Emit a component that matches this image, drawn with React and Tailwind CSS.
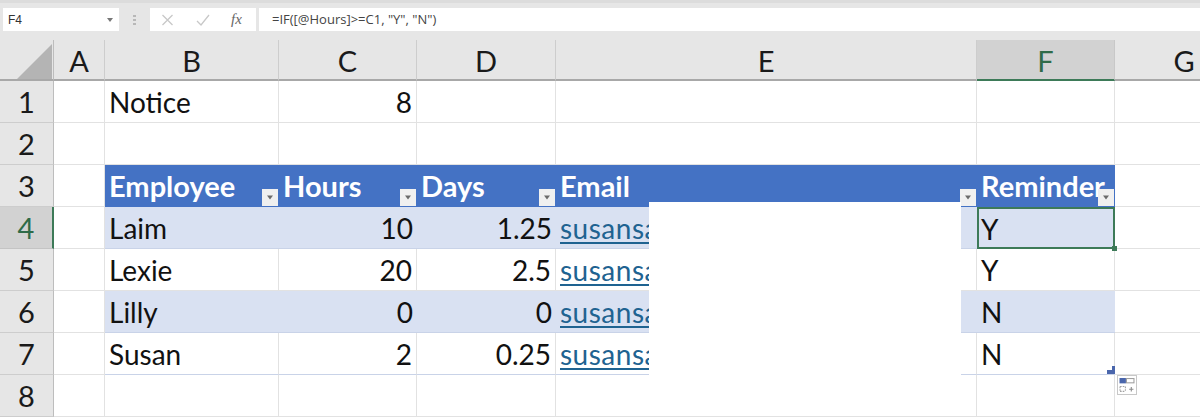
import React from "react";

const grid = "border-r border-b border-[#e2e2e2]";
const Filter = () => (
  <span className="absolute right-[1px] bottom-[1px] w-[16px] h-[17px] bg-[#f0f0f0] flex items-center justify-center">
    <svg width="8" height="5" viewBox="0 0 8 5"><path d="M1 0.5h6L4 4.5z" fill="#6b6b6b" /></svg>
  </span>
);

const ColHead = ({ children, active, cls = "" }) => (
  <div className={`flex items-center justify-center text-[29px] border-r border-b-2 pt-[3px] ${active ? "bg-[#d2d2d2] text-[#2f6b48] border-b-[#3d7a58] border-r-[#c8c8c8]" : "bg-[#e6e6e6] text-[#1a1a1a] border-b-[#a8a8a8] border-r-[#cdcdcd]"} ${cls}`}>
    {children}
  </div>
);
const RowHead = ({ children, active }) => (
  <div className={`flex items-center justify-center text-[29px] border-b pt-[1px] ${active ? "bg-[#d2d2d2] text-[#2f6b48] border-r-2 border-r-[#3d7a58] border-b-[#c4c4c4]" : "bg-[#e6e6e6] text-[#1a1a1a] border-r border-r-[#bdbdbd] border-b-[#cdcdcd]"}`}>
    {children}
  </div>
);
const Cell = ({ children, right, band, active, last, cls = "" }) => {
  const skin = active
    ? "bg-[#d9e1f2] border-2 border-[#3d7a58]"
    : band
      ? "bg-[#d9e1f2] border-b border-[#c9d3e8]"
      : last
        ? "border-r border-b border-r-[#e2e2e2] border-b-[#c9d3e8]"
        : grid;
  return (
    <div className={`relative flex items-center text-[28px] text-[#111] pt-[1px] overflow-hidden ${active ? "pl-[2px]" : "pl-[4px]"} ${right ? "justify-end pr-[4px]" : ""} ${skin} ${cls}`}>
      {children}
    </div>
  );
};
const Header = ({ children, cls = "" }) => (
  <div className={`relative flex items-center bg-[#4472c4] text-white font-bold text-[29px] pl-[4px] whitespace-nowrap overflow-hidden ${cls}`}>
    <span className="-mt-[1px]">{children}</span>
    <Filter />
  </div>
);
const Link = () => <span className="text-[#1f6391] underline decoration-2 underline-offset-[3px] whitespace-nowrap tracking-[0.5px]">susansa</span>;

const rows = [
  ["Laim", "10", "1.25", "Y", true],
  ["Lexie", "20", "2.5", "Y", false],
  ["Lilly", "0", "0", "N", true],
  ["Susan", "2", "0.25", "N", false],
];

export default function App() {
  return (
    <div className="relative w-[1200px] h-[420px] overflow-hidden bg-white" style={{ fontFamily: '"Lato", "Open Sans", sans-serif' }}>
      {/* formula bar */}
      <div className="h-[40px] bg-[#e6e6e6] flex items-start gap-[3px] pt-[5px] pl-[3px] border-t-[3px] border-t-[#dcdcdc]">
        <div className="w-[116px] h-[23px] bg-white flex items-center justify-between pl-[5px] pr-[6px] text-[12px] text-[#333]" style={{ fontFamily: '"Liberation Sans", sans-serif' }}>
          <span>F4</span>
          <svg width="6" height="4" viewBox="0 0 6 4"><path d="M0 0h6L3 4z" fill="#777" /></svg>
        </div>
        <div className="w-[25px] flex flex-col items-center justify-center h-[23px] gap-[2px]">
          <span className="w-[3px] h-[2px] bg-[#b8b8b8]" /><span className="w-[3px] h-[2px] bg-[#b8b8b8]" /><span className="w-[3px] h-[2px] bg-[#b8b8b8]" />
        </div>
        <div className="w-[106px] h-[23px] bg-white flex items-center pl-[11px] gap-[22px]">
          <svg width="13" height="12" viewBox="0 0 13 12"><path d="M1.5 1l10 10M11.5 1l-10 10" stroke="#c8c8c8" strokeWidth="1.3" fill="none" /></svg>
          <svg width="14" height="12" viewBox="0 0 14 12"><path d="M1 7l4 4 8-10" stroke="#c8c8c8" strokeWidth="1.3" fill="none" /></svg>
          <span className="text-[15px] italic text-[#666] -ml-[1px]" style={{ fontFamily: '"Liberation Serif", serif' }}>fx</span>
        </div>
        <div className="flex-1 h-[23px] bg-white flex items-center pl-[13px] text-[13px] text-[#444]" style={{ fontFamily: '"Open Sans", sans-serif' }}>
          =IF([@Hours]&gt;=C1, "Y", "N")
        </div>
      </div>

      {/* sheet */}
      <div className="grid grid-cols-[54px_51px_174px_138px_139px_421px_138px_138px] grid-rows-[41px_42px_42px_42px_42px_42px_42px_42px_42px]">
        <div className="relative bg-[#e6e6e6] border-r border-b-2 border-r-[#bdbdbd] border-b-[#a8a8a8]">
          <svg className="absolute left-[17px] top-[4px]" width="36" height="35" viewBox="0 0 36 35"><path d="M35 0V35H0z" fill="#b4b4b4" /></svg>
        </div>
        <ColHead>A</ColHead><ColHead>B</ColHead><ColHead>C</ColHead><ColHead>D</ColHead><ColHead>E</ColHead>
        <ColHead active>F</ColHead><ColHead cls="border-r-0">G</ColHead>

        <RowHead>1</RowHead><Cell /><Cell>Notice</Cell><Cell right>8</Cell><Cell /><Cell /><Cell /><Cell />
        <RowHead>2</RowHead><Cell /><Cell /><Cell /><Cell /><Cell /><Cell /><Cell />

        <RowHead>3</RowHead><Cell />
        <Header>Employee</Header><Header>Hours</Header><Header>Days</Header><Header>Email</Header><Header>Reminder</Header>
        <Cell />

        {rows.map(([name, hours, days, rem, band], i) => {
          const last = i === rows.length - 1;
          return (
            <React.Fragment key={name}>
              <RowHead active={i === 0}>{i + 4}</RowHead>
              <Cell />
              <Cell band={band} last={last}>{name}</Cell>
              <Cell band={band} last={last} right>{hours}</Cell>
              <Cell band={band} last={last} right>{days}</Cell>
              <Cell band={band} last={last}><Link /></Cell>
              <Cell band={band} last={last} active={i === 0}>{rem}</Cell>
              <Cell />
            </React.Fragment>
          );
        })}

        <RowHead>8</RowHead><Cell /><Cell /><Cell /><Cell /><Cell /><Cell /><Cell />
      </div>

      {/* redaction patch over the email column */}
      <div className="absolute left-[649px] top-[202px] w-[312px] h-[173px] bg-white" />
      {/* fill handle on the active cell */}
      <div className="absolute left-[1112px] top-[246px] w-[5px] h-[5px] bg-[#3d7a58]" />
      {/* table resize corner */}
      <svg className="absolute left-[1107px] top-[366px]" width="9" height="9" viewBox="0 0 9 9"><path d="M5 0h3v8H0V4h5z" fill="#4a66ac" /></svg>
      {/* quick analysis button */}
      <div className="absolute left-[1117px] top-[375px] w-[20px] h-[20px] bg-white border border-[#c8c8c8] flex items-center justify-center">
        <svg width="16" height="15" viewBox="0 0 14 14">
          <rect x="0" y="0" width="6" height="5" fill="#4a66ac" />
          <rect x="6.5" y="0.5" width="7" height="4" fill="none" stroke="#a0a0a0" />
          <path d="M0.5 8h5M0.5 12.5h5M5.5 8v4.5M0.5 8v4.5" stroke="#a0a0a0" strokeDasharray="1.5 1" fill="none" />
          <path d="M9 10.5h4M11 8.5v4" stroke="#8a8a8a" />
        </svg>
      </div>
    </div>
  );
}
